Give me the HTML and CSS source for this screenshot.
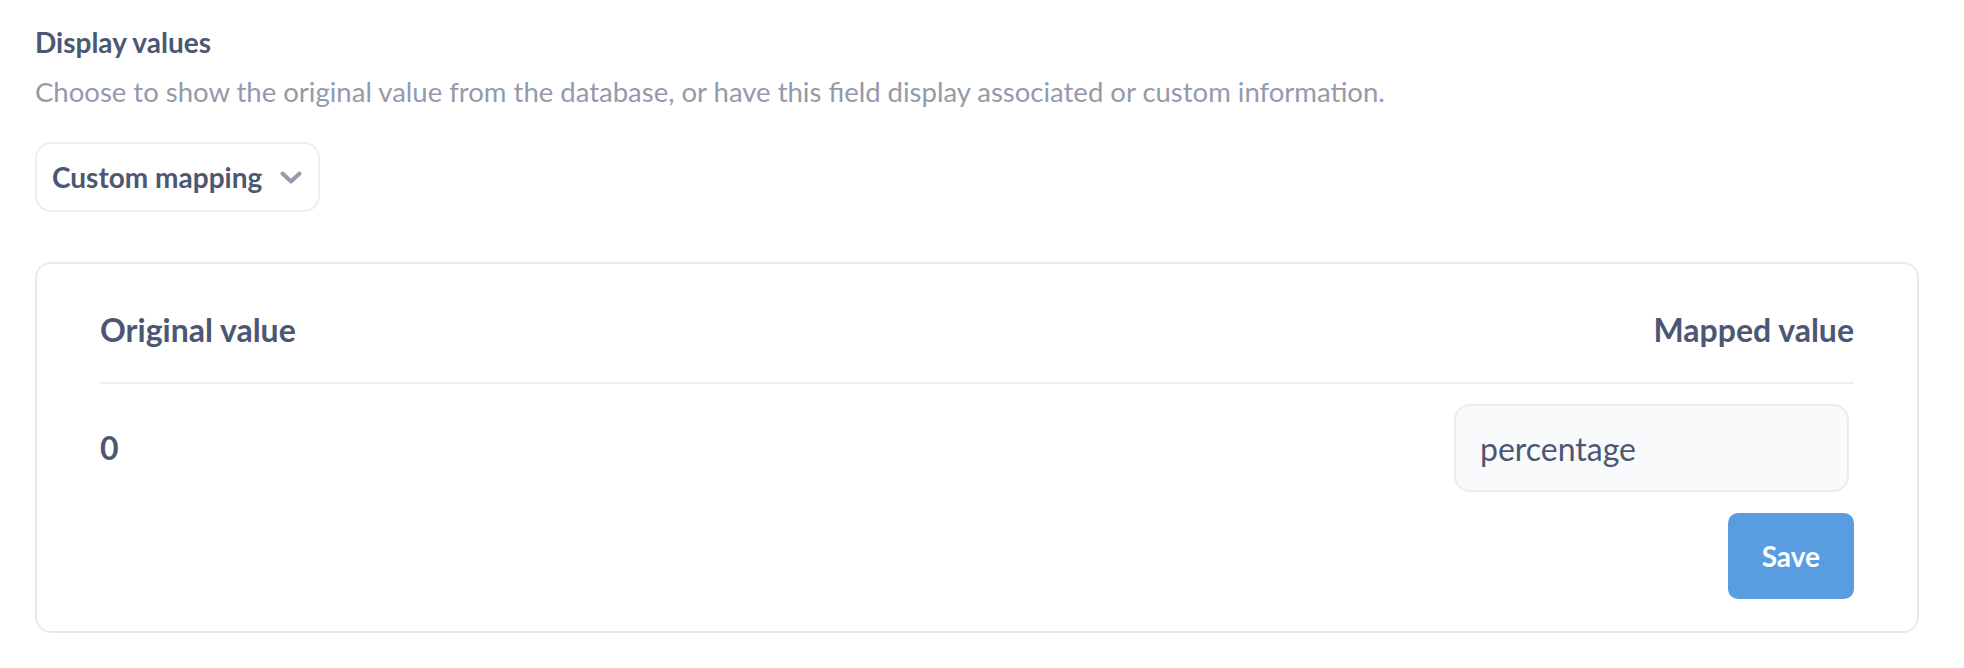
FILE: index.html
```html
<!DOCTYPE html>
<html lang="en">
<head>
<meta charset="utf-8">
<title>Display values</title>
<link rel="stylesheet" href="styles.css">
</head>
<body>
<main class="page">
  <h2 class="section-title">Display values</h2>
  <p class="section-desc">Choose to show the original value from the database, or have this field display associated or custom information.</p>
  <button class="select" type="button">
    <span class="select-label">Custom mapping</span>
    <svg class="select-chevron" width="22" height="13" viewBox="0 0 22 13" aria-hidden="true">
      <polyline points="2.5,2.5 11,10.5 19.5,2.5" fill="none" stroke="currentColor" stroke-width="4" stroke-linecap="round" stroke-linejoin="round"/>
    </svg>
  </button>
  <section class="mapping-card">
    <div class="mapping-head">
      <span>Original value</span>
      <span>Mapped value</span>
    </div>
    <div class="mapping-row">
      <span class="mapping-original">0</span>
      <input class="mapping-input" type="text" value="percentage">
    </div>
    <div class="mapping-actions">
      <button class="btn-primary" type="button">Save</button>
    </div>
  </section>
</main>
</body>
</html>
```
FILE: styles.css
```css
* { box-sizing: border-box; }

html, body {
  margin: 0;
  background: #ffffff;
}

body {
  font-family: Lato, "Noto Sans", sans-serif;
  color: #4c5773;
}

.page {
  padding: 25px 45px 0 35px;
  display: flex;
  flex-direction: column;
  align-items: flex-start;
}

.section-title {
  margin: 0;
  font-size: 28px;
  line-height: 34px;
  font-weight: 700;
  color: #4c5773;
}

.section-desc {
  margin: 16px 0 0;
  font-size: 27.5px;
  line-height: 34px;
  font-weight: 400;
  color: #949aab;
}

.select {
  margin-top: 33px;
  height: 70px;
  display: inline-flex;
  align-items: center;
  gap: 18px;
  padding: 0 16px 0 15px;
  border: 2px solid #eeeeee;
  border-radius: 16px;
  background: #ffffff;
  font-family: inherit;
  font-size: 28px;
  font-weight: 700;
  color: #4c5773;
  cursor: pointer;
}

.select-label {
  line-height: 34px;
}

.select-chevron {
  color: #949aab;
  display: block;
}

.mapping-card {
  align-self: stretch;
  margin-top: 50px;
  border: 2px solid #ece8f3;
  border-radius: 16px;
  padding: 46px 63px 32px;
}

.mapping-head {
  display: flex;
  justify-content: space-between;
  font-size: 32px;
  line-height: 40px;
  font-weight: 700;
  padding-bottom: 32px;
  border-bottom: 2px solid #eeeef0;
}

.mapping-row {
  margin-top: 20px;
  display: flex;
  align-items: center;
  justify-content: space-between;
}

.mapping-original {
  font-size: 32px;
  line-height: 40px;
  font-weight: 700;
}

.mapping-input {
  width: 395px;
  height: 88px;
  margin-right: 5px;
  padding: 0 24px;
  border: 2px solid #ececec;
  border-radius: 16px;
  background: #f9fafb;
  font-family: inherit;
  font-size: 32px;
  color: #4c5773;
  outline: none;
}

.mapping-actions {
  margin-top: 21px;
  display: flex;
  justify-content: flex-end;
}

.btn-primary {
  height: 86px;
  padding: 0 34px;
  border: none;
  border-radius: 10px;
  background: #589ddf;
  color: #ffffff;
  font-family: inherit;
  font-size: 28px;
  font-weight: 700;
  cursor: pointer;
}
```
